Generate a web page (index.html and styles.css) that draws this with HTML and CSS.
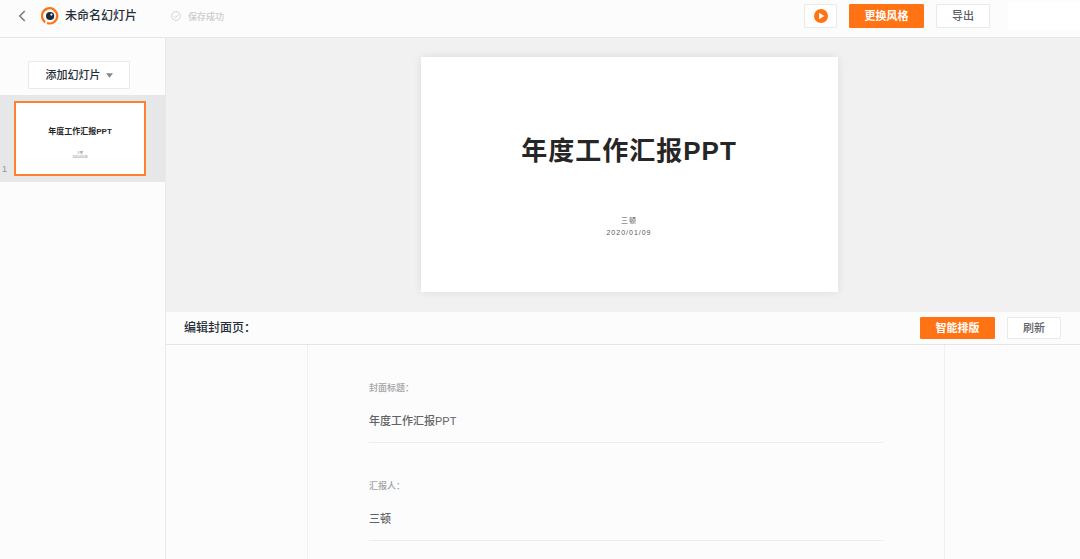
FILE: index.html
```html
<!DOCTYPE html>
<html lang="zh-CN">
<head>
<meta charset="utf-8">
<meta name="viewport" content="width=device-width, initial-scale=1">
<title>未命名幻灯片</title>
<link rel="stylesheet" href="styles.css">
</head>
<body>
<header class="topbar">
  <button class="back" type="button" aria-label="返回">
    <svg width="8" height="12" viewBox="0 0 8 12"><path d="M6.8 1 1.8 6l5 5" fill="none" stroke="#7d8085" stroke-width="1.7"/></svg>
  </button>
  <svg class="logo" width="18" height="18" viewBox="0 0 18 18" aria-hidden="true">
    <path d="M3.2 14.2A7.6 7.6 0 1 1 6 16" fill="none" stroke="#ff7314" stroke-width="2.2"/>
    <path d="M2 12.6 4.3 13.4 4.3 16.4 2.6 15.4z" fill="#ff7314"/>
    <circle cx="9.1" cy="9" r="4.1" fill="#1f2937"/>
    <circle cx="10.4" cy="7.6" r="1.1" fill="#fff"/>
  </svg>
  <h1 class="doc-title">未命名幻灯片</h1>
  <p class="status">
    <svg width="10" height="10" viewBox="0 0 10 10" aria-hidden="true"><g fill="none" stroke="#cfd0d2" stroke-width="0.9"><circle cx="5" cy="5" r="4.4"/><path d="M2.8 5 4.5 6.6 7.5 3.6"/></g></svg>
    <span>保存成功</span>
  </p>
  <div class="actions">
    <button class="btn btn-play" type="button" aria-label="播放">
      <svg width="14" height="14" viewBox="0 0 14 14"><circle cx="7" cy="7" r="7" fill="#ff7314"/><path d="M5.2 3.8v6.4L10.2 7z" fill="#fff"/></svg>
    </button>
    <button class="btn btn-primary" type="button">更换风格</button>
    <button class="btn" type="button">导出</button>
  </div>
  <div class="account"></div>
</header>
<div class="workspace">
  <aside class="sidebar">
    <button class="btn btn-add" type="button">添加幻灯片
      <svg width="7" height="5" viewBox="0 0 7 5" aria-hidden="true"><path d="M0 .3h7L3.5 4.8z" fill="#85888c"/></svg>
    </button>
    <div class="slide-item">
      <span class="slide-number">1</span>
      <div class="thumb">
        <p class="thumb-title">年度工作汇报PPT</p>
        <p class="thumb-meta">三顿<br>2020/01/09</p>
      </div>
    </div>
  </aside>
  <main class="main">
    <section class="stage">
      <article class="slide">
        <h2 class="slide-title">年度工作汇报PPT</h2>
        <p class="slide-meta">三顿<br>2020/01/09</p>
      </article>
    </section>
    <section class="editor">
      <div class="editor-bar">
        <h2 class="editor-title">编辑封面页：</h2>
        <button class="btn btn-primary btn-small" type="button">智能排版</button>
        <button class="btn btn-small" type="button">刷新</button>
      </div>
      <div class="editor-body">
        <form class="form">
          <div class="field">
            <label for="cover-title">封面标题：</label>
            <input id="cover-title" type="text" value="年度工作汇报PPT">
          </div>
          <div class="field">
            <label for="reporter">汇报人：</label>
            <input id="reporter" type="text" value="三顿">
          </div>
        </form>
      </div>
    </section>
  </main>
</div>
</body>
</html>
```

FILE: styles.css
```css
* {
  box-sizing: border-box;
}

body,
h1,
h2,
p {
  margin: 0;
}

body {
  display: flex;
  flex-direction: column;
  min-height: 100vh;
  background: #fcfcfc;
  color: #252d38;
  font-family: "Liberation Sans", "Noto Sans CJK SC", sans-serif;
  font-size: 11px;
}

button,
input {
  font: inherit;
  color: inherit;
}

svg {
  display: block;
  flex: none;
}

/* Top bar */
.topbar {
  display: flex;
  align-items: center;
  padding: 0 0 5px 18px;
  height: 38px;
  border-bottom: 1px solid #e7e7e7;
}

.back {
  padding: 0;
  border: 0;
  background: none;
}

.logo {
  margin: 0 6px 0 15px;
}

.doc-title {
  font-size: 12px;
  line-height: 18px;
  font-weight: 500;
}

.status {
  display: flex;
  align-items: center;
  gap: 7px;
  margin-left: 34px;
  color: #cbccce;
  font-size: 9px;
  font-weight: 500;
}

.actions {
  display: flex;
  gap: 12px;
  margin-left: auto;
}

.btn {
  display: flex;
  align-items: center;
  justify-content: center;
  height: 24px;
  min-width: 54px;
  padding: 0;
  border: 1px solid #e9eaeb;
  border-radius: 1px;
  background: #fff;
  color: #5d6064;
  font-weight: 500;
  line-height: 16px;
}

.btn-play {
  min-width: 33px;
}

.btn-primary {
  min-width: 75px;
  border-color: #ff7314;
  background: #ff7314;
  color: #fff;
  font-weight: 700;
}

.btn-small {
  height: 22px;
}

.account {
  width: 72px;
  height: 28px;
  margin-left: 18px;
  background: #fff;
}

/* Slide list */
.workspace {
  display: flex;
  flex: 1;
}

.sidebar {
  width: 166px;
  border-right: 1px solid #e9e9e9;
}

.btn-add {
  gap: 5px;
  width: 102px;
  height: 28px;
  margin: 23px 0 6px 28px;
  color: #252d38;
}

.slide-item {
  display: flex;
  align-items: flex-end;
  padding: 6px 0 6px 2px;
  background: #e6e7e9;
}

.slide-number {
  width: 12px;
  color: #929497;
  font-size: 9px;
  line-height: 14px;
}

.thumb {
  width: 132px;
  height: 75px;
  padding-top: 23px;
  border: 2px solid #ff8030;
  background: #fff;
  text-align: center;
}

.thumb-title {
  color: #262626;
  font-size: 8px;
  line-height: 12px;
  font-weight: 700;
}

.thumb-meta {
  margin-top: 13px;
  color: #777;
  font-size: 3px;
  line-height: 4px;
}

/* Slide preview */
.main {
  display: flex;
  flex: 1;
  flex-direction: column;
  min-width: 0;
}

.stage {
  display: flex;
  justify-content: center;
  padding: 19px 0 20px 12px;
  background: #f1f1f1;
}

.slide {
  width: 417px;
  height: 235px;
  padding-top: 76px;
  background: #fff;
  box-shadow: 0 0 9px rgba(0, 0, 0, 0.09);
  text-align: center;
}

.slide-title {
  color: #262626;
  font-size: 26px;
  line-height: 36px;
  font-weight: 700;
  letter-spacing: 1px;
}

.slide-meta {
  margin-top: 46px;
  color: #555;
  font-size: 7px;
  line-height: 12px;
  letter-spacing: 1px;
}

/* Slide editor */
.editor {
  display: flex;
  flex: 1;
  flex-direction: column;
}

.editor-bar {
  display: flex;
  align-items: center;
  gap: 12px;
  height: 33px;
  padding: 0 19px 0 18px;
  border-bottom: 1px solid #e5e5e6;
}

.editor-title {
  margin-right: auto;
  font-size: 12px;
  line-height: 18px;
  font-weight: 500;
}

.editor-body {
  display: flex;
  flex: 1;
  padding: 0 135px 0 141px;
}

.form {
  display: flex;
  flex: 1;
  flex-direction: column;
  gap: 36px;
  padding: 36px 61px 16px;
  border: solid #f0f0f1;
  border-width: 0 1px;
}

.field {
  display: flex;
  flex-direction: column;
  gap: 13px;
}

.field label {
  color: #a0a2a5;
  font-size: 9px;
  line-height: 14px;
  font-weight: 500;
}

.field input {
  width: 100%;
  height: 35px;
  padding: 0 0 10px;
  border: 0;
  border-bottom: 1px solid #eeeeef;
  background: none;
  color: #606265;
  font-weight: 500;
  outline: none;
}
```
